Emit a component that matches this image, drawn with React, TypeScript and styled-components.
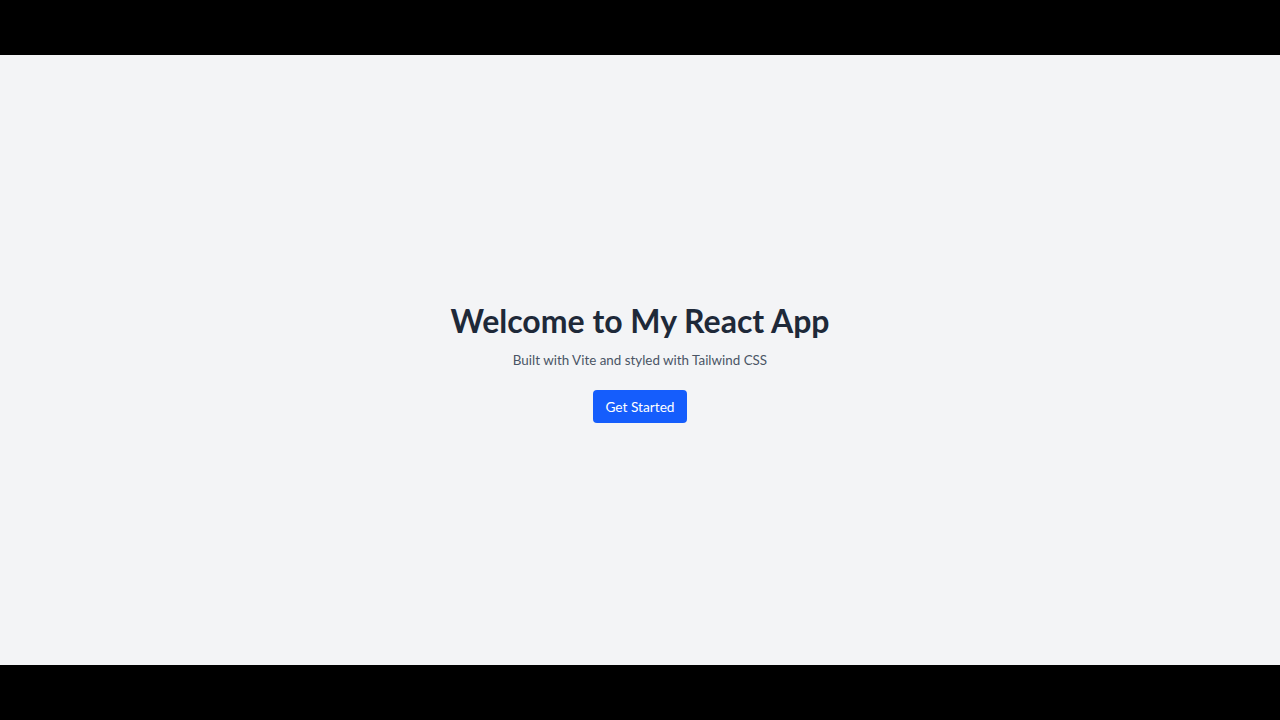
import { FC } from "react";
import styled, { createGlobalStyle } from "styled-components";

const GlobalStyle = createGlobalStyle`
  html, body {
    margin: 0;
    padding: 0;
    background: #000;
  }
  body {
    font-family: Lato, "Noto Sans", Arial, sans-serif;
  }
`;

// letterboxed frame: black bars above and below the app area
const Screen = styled.div`
  height: 100vh;
  display: flex;
  align-items: center;
  background: #000;
`;

const Main = styled.main`
  width: 100%;
  height: 610px;
  background: #f3f4f6;
  display: flex;
  flex-direction: column;
  align-items: center;
  justify-content: center;
  padding-top: 4px;
  box-sizing: border-box;
`;

const Title = styled.h1`
  margin: 0;
  font-size: 32px;
  line-height: 40px;
  font-weight: 700;
  color: #1e2939;
`;

const Subtitle = styled.p`
  margin: 9px 0 0;
  font-size: 13.4px;
  line-height: 20px;
  color: #4a5565;
`;

const PrimaryButton = styled.button`
  margin-top: 20px;
  height: 33px;
  padding: 0 12.5px;
  border: none;
  border-radius: 4px;
  background: #155dfc;
  color: #fff;
  font-family: inherit;
  font-size: 13.7px;
  line-height: 20px;
  cursor: pointer;

  &:hover {
    background: #1447e6;
  }
`;

const App: FC = () => {
  return (
    <>
      <GlobalStyle />
      <Screen>
        <Main>
          <Title>Welcome to My React App</Title>
          <Subtitle>Built with Vite and styled with Tailwind CSS</Subtitle>
          <PrimaryButton>Get Started</PrimaryButton>
        </Main>
      </Screen>
    </>
  );
};

export default App;
